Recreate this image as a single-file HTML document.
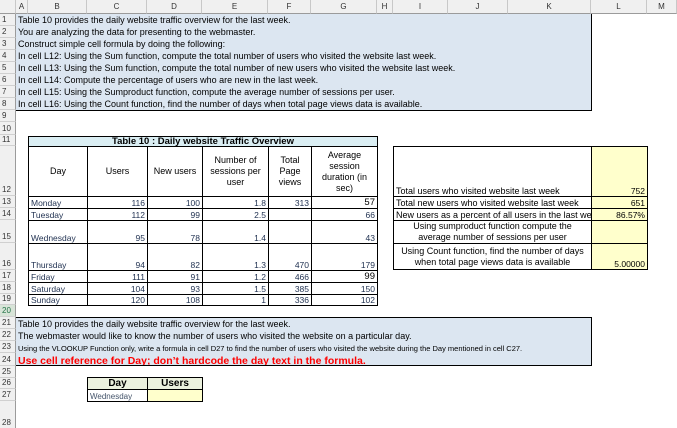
<!DOCTYPE html>
<html><head><meta charset="utf-8"><style>
*{margin:0;padding:0;box-sizing:border-box}
body{width:677px;height:428px;overflow:hidden;background:#fff;font-family:"Liberation Sans",Arial,sans-serif;font-size:9px;color:#000;position:relative}
.a{position:absolute;white-space:nowrap;overflow:hidden}
.ch{position:absolute;top:0;height:14px;background:#f0f0f0;border-right:1px solid #c8c8c8;border-bottom:1px solid #9b9b9b;text-align:center;font-size:8px;line-height:14px;color:#333}
.rh{position:absolute;left:0;width:16px;background:#f0f0f0;border-right:1px solid #9b9b9b;border-bottom:1px solid #d0d0d0;font-size:8px;color:#333;padding-left:2px;display:flex;align-items:flex-end;padding-bottom:1px}
.c{position:absolute;border:1px solid #000;overflow:hidden;white-space:nowrap;display:flex;align-items:flex-end;padding:0 2px;font-size:8.5px}
.r{justify-content:flex-end}
.m{justify-content:center;text-align:center;white-space:normal;align-items:center;line-height:11px}
.n{color:#1f3050}
</style></head><body>
<div class="ch" style="left:0;width:16px"></div>
<div class="ch" style="left:16px;width:12px">A</div>
<div class="ch" style="left:28px;width:59px">B</div>
<div class="ch" style="left:87px;width:60px">C</div>
<div class="ch" style="left:147px;width:55px">D</div>
<div class="ch" style="left:202px;width:66px">E</div>
<div class="ch" style="left:268px;width:43px">F</div>
<div class="ch" style="left:311px;width:66px">G</div>
<div class="ch" style="left:377px;width:16px">H</div>
<div class="ch" style="left:393px;width:55px">I</div>
<div class="ch" style="left:448px;width:60px">J</div>
<div class="ch" style="left:508px;width:83px">K</div>
<div class="ch" style="left:591px;width:56px">L</div>
<div class="ch" style="left:647px;width:30px">M</div>
<div class="rh" style="top:14px;height:12px">1</div>
<div class="rh" style="top:26px;height:12px">2</div>
<div class="rh" style="top:38px;height:12px">3</div>
<div class="rh" style="top:50px;height:12px">4</div>
<div class="rh" style="top:62px;height:12px">5</div>
<div class="rh" style="top:74px;height:12px">6</div>
<div class="rh" style="top:86px;height:12px">7</div>
<div class="rh" style="top:98px;height:12px">8</div>
<div class="rh" style="top:110px;height:12px">9</div>
<div class="rh" style="top:122px;height:13px">10</div>
<div class="rh" style="top:135px;height:11px">11</div>
<div class="rh" style="top:146px;height:50px">12</div>
<div class="rh" style="top:196px;height:12px">13</div>
<div class="rh" style="top:208px;height:12px">14</div>
<div class="rh" style="top:220px;height:23px">15</div>
<div class="rh" style="top:243px;height:27px">16</div>
<div class="rh" style="top:270px;height:12px">17</div>
<div class="rh" style="top:282px;height:12px">18</div>
<div class="rh" style="top:294px;height:11px">19</div>
<div class="rh" style="top:305px;height:12px;background:#d8e4d8;color:#217346">20</div>
<div class="rh" style="top:317px;height:12px">21</div>
<div class="rh" style="top:329px;height:12px">22</div>
<div class="rh" style="top:341px;height:12px">23</div>
<div class="rh" style="top:353px;height:13px">24</div>
<div class="rh" style="top:366px;height:12px">25</div>
<div class="rh" style="top:378px;height:11px">26</div>
<div class="rh" style="top:389px;height:12px">27</div>
<div class="rh" style="top:401px;height:27px;border-bottom:none">28</div>

<div class="a" style="left:16px;top:14px;width:576px;height:97px;background:#dce6f1;border-right:1px solid #000;border-bottom:1px solid #000;padding-left:2px;font-size:9px;line-height:12px">
Table 10 provides the daily website traffic overview for the last week.<br>
You are analyzing the data for presenting to the webmaster.<br>
Construct simple cell formula by doing the following:<br>
In cell L12: Using the Sum function, compute the total number of users who visited the website last week.<br>
In cell L13: Using the Sum function, compute the total number of new users who visited the website last week.<br>
In cell L14: Compute the percentage of users who are new in the last week.<br>
In cell L15: Using the Sumproduct function, compute the average number of sessions per user.<br>
In cell L16: Using the Count function, find the number of days when total page views data is available.
</div>

<div class="c m" style="left:28px;top:136px;width:350px;height:11px;background:#daeef3;font-weight:bold;font-size:9.5px;line-height:9px">Table 10 : Daily website Traffic Overview</div>
<div class="c m" style="left:28px;top:146px;width:60px;height:51px;font-size:9px">Day</div>
<div class="c m" style="left:87px;top:146px;width:61px;height:51px;font-size:9px">Users</div>
<div class="c m" style="left:147px;top:146px;width:56px;height:51px;font-size:9px">New users</div>
<div class="c m" style="left:202px;top:146px;width:67px;height:51px;font-size:9px">Number of sessions per user</div>
<div class="c m" style="left:268px;top:146px;width:44px;height:51px;font-size:9px">Total Page views</div>
<div class="c m" style="left:311px;top:146px;width:67px;height:51px;padding:0 5px;font-size:9px">Average session duration (in sec)</div>

<div class="c n" style="left:28px;top:196px;width:60px;height:13px">Monday</div>
<div class="c r n" style="left:87px;top:196px;width:61px;height:13px">116</div>
<div class="c r n" style="left:147px;top:196px;width:56px;height:13px">100</div>
<div class="c r n" style="left:202px;top:196px;width:67px;height:13px">1.8</div>
<div class="c r n" style="left:268px;top:196px;width:44px;height:13px">313</div>
<div class="c r" style="left:311px;top:196px;width:67px;height:13px;font-size:9.5px">57</div>

<div class="c n" style="left:28px;top:208px;width:60px;height:13px">Tuesday</div>
<div class="c r n" style="left:87px;top:208px;width:61px;height:13px">112</div>
<div class="c r n" style="left:147px;top:208px;width:56px;height:13px">99</div>
<div class="c r n" style="left:202px;top:208px;width:67px;height:13px">2.5</div>
<div class="c r n" style="left:268px;top:208px;width:44px;height:13px"></div>
<div class="c r n" style="left:311px;top:208px;width:67px;height:13px">66</div>

<div class="c n" style="left:28px;top:220px;width:60px;height:24px">Wednesday</div>
<div class="c r n" style="left:87px;top:220px;width:61px;height:24px">95</div>
<div class="c r n" style="left:147px;top:220px;width:56px;height:24px">78</div>
<div class="c r n" style="left:202px;top:220px;width:67px;height:24px">1.4</div>
<div class="c r n" style="left:268px;top:220px;width:44px;height:24px"></div>
<div class="c r n" style="left:311px;top:220px;width:67px;height:24px">43</div>

<div class="c n" style="left:28px;top:243px;width:60px;height:28px">Thursday</div>
<div class="c r n" style="left:87px;top:243px;width:61px;height:28px">94</div>
<div class="c r n" style="left:147px;top:243px;width:56px;height:28px">82</div>
<div class="c r n" style="left:202px;top:243px;width:67px;height:28px">1.3</div>
<div class="c r n" style="left:268px;top:243px;width:44px;height:28px">470</div>
<div class="c r n" style="left:311px;top:243px;width:67px;height:28px">179</div>

<div class="c n" style="left:28px;top:270px;width:60px;height:13px">Friday</div>
<div class="c r n" style="left:87px;top:270px;width:61px;height:13px">111</div>
<div class="c r n" style="left:147px;top:270px;width:56px;height:13px">91</div>
<div class="c r n" style="left:202px;top:270px;width:67px;height:13px">1.2</div>
<div class="c r n" style="left:268px;top:270px;width:44px;height:13px">466</div>
<div class="c r" style="left:311px;top:270px;width:67px;height:13px;font-size:9.5px">99</div>

<div class="c n" style="left:28px;top:282px;width:60px;height:13px">Saturday</div>
<div class="c r n" style="left:87px;top:282px;width:61px;height:13px">104</div>
<div class="c r n" style="left:147px;top:282px;width:56px;height:13px">93</div>
<div class="c r n" style="left:202px;top:282px;width:67px;height:13px">1.5</div>
<div class="c r n" style="left:268px;top:282px;width:44px;height:13px">385</div>
<div class="c r n" style="left:311px;top:282px;width:67px;height:13px">150</div>

<div class="c n" style="left:28px;top:294px;width:60px;height:12px">Sunday</div>
<div class="c r n" style="left:87px;top:294px;width:61px;height:12px">120</div>
<div class="c r n" style="left:147px;top:294px;width:56px;height:12px">108</div>
<div class="c r n" style="left:202px;top:294px;width:67px;height:12px">1</div>
<div class="c r n" style="left:268px;top:294px;width:44px;height:12px">336</div>
<div class="c r n" style="left:311px;top:294px;width:67px;height:12px">102</div>

<div class="c" style="left:393px;top:146px;width:199px;height:51px;font-size:9px">Total users who visited website last week</div>
<div class="c r" style="left:591px;top:146px;width:57px;height:51px;background:#ffffcc">752</div>
<div class="c" style="left:393px;top:196px;width:199px;height:13px;font-size:9px">Total new users who visited website last week</div>
<div class="c r" style="left:591px;top:196px;width:57px;height:13px;background:#ffffcc">651</div>
<div class="c" style="left:393px;top:208px;width:199px;height:13px;font-size:9px">New users as a percent of all users in the last week</div>
<div class="c r" style="left:591px;top:208px;width:57px;height:13px;background:#ffffcc">86.57%</div>
<div class="c m" style="left:393px;top:220px;width:199px;height:24px;font-size:9px">Using sumproduct function compute the<br>average number of sessions per user</div>
<div class="c r" style="left:591px;top:220px;width:57px;height:24px;background:#ffffcc"></div>
<div class="c m" style="left:393px;top:243px;width:199px;height:27px;font-size:9px">Using Count function, find the number of days<br>when total page views data is available</div>
<div class="c r" style="left:591px;top:243px;width:57px;height:27px;background:#ffffcc">5.00000</div>

<div class="a" style="left:16px;top:317px;width:576px;height:49px;background:#dce6f1;border:1px solid #000;border-left:none;padding-left:2px;line-height:12px;font-size:9px">
Table 10 provides the daily website traffic overview for the last week.<br>
The webmaster would like to know the number of users who visited the website on a particular day.<br>
<span style="font-size:7.5px">Using the VLOOKUP Function only, write a formula in cell D27 to find the number of users who visited the website during the Day mentioned in cell C27.</span><br>
<span style="color:#ff0000;font-weight:bold;font-size:10.5px">Use cell reference for Day; don’t hardcode the day text in the formula.</span>
</div>

<div class="c m" style="left:87px;top:377px;width:61px;height:13px;background:#ebf1de;font-weight:bold;font-size:10px">Day</div>
<div class="c m" style="left:147px;top:377px;width:56px;height:13px;background:#ebf1de;font-weight:bold;font-size:10px">Users</div>
<div class="c n" style="left:87px;top:389px;width:61px;height:13px;font-size:8px;color:#44546a">Wednesday</div>
<div class="c" style="left:147px;top:389px;width:56px;height:13px;background:#ffffcc"></div>
</body></html>
